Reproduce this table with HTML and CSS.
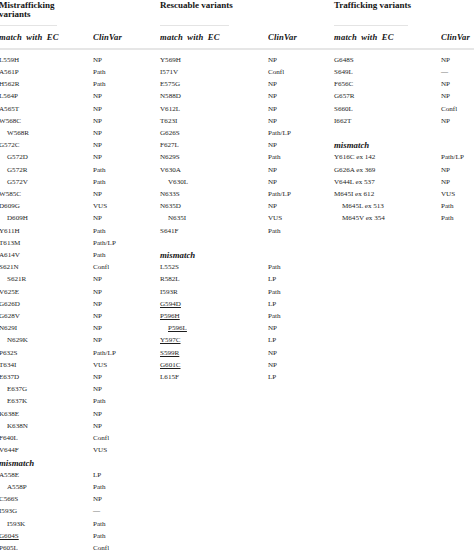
FILE: index.html
```html
<!DOCTYPE html>
<html lang="en">
<head>
<meta charset="utf-8">
<title>Variants</title>
<link rel="stylesheet" href="styles.css">
</head>
<body>
<table class="variants">
  <colgroup>
    <col class="w-var1"><col class="w-cv1"><col class="w-var2"><col class="w-cv2"><col class="w-var3"><col class="w-cv3">
  </colgroup>
  <thead>
    <tr class="title-row">
      <th colspan="2"><div class="title t1">Mistrafficking variants</div></th>
      <th colspan="2"><div class="title t2">Rescuable variants</div></th>
      <th colspan="2"><div class="title t3">Trafficking variants</div></th>
    </tr>
    <tr class="head-row">
      <th>match with EC</th><th>ClinVar</th>
      <th>match with EC</th><th>ClinVar</th>
      <th>match with EC</th><th class="cut">ClinVar</th>
    </tr>
  </thead>
  <tbody>
    <tr><td>L559H</td><td>NP</td><td>Y569H</td><td>NP</td><td>G648S</td><td>NP</td></tr>
    <tr><td>A561P</td><td>Path</td><td>I571V</td><td>Confl</td><td>S649L</td><td>—</td></tr>
    <tr><td>H562R</td><td>Path</td><td>E575G</td><td>NP</td><td>F656C</td><td>NP</td></tr>
    <tr><td>L564P</td><td>NP</td><td>N588D</td><td>NP</td><td>G657R</td><td>NP</td></tr>
    <tr><td>A565T</td><td>NP</td><td>V612L</td><td>NP</td><td>S660L</td><td>Confl</td></tr>
    <tr><td>W568C</td><td>NP</td><td>T623I</td><td>NP</td><td>I662T</td><td>NP</td></tr>
    <tr><td class="ind">W568R</td><td>NP</td><td>G626S</td><td>Path/LP</td><td></td><td></td></tr>
    <tr><td>G572C</td><td>NP</td><td>F627L</td><td>NP</td><td class="sub">mismatch</td><td></td></tr>
    <tr><td class="ind">G572D</td><td>NP</td><td>N629S</td><td>Path</td><td>Y616C ex 142</td><td>Path/LP</td></tr>
    <tr><td class="ind">G572R</td><td>Path</td><td>V630A</td><td>NP</td><td>G626A ex 369</td><td>NP</td></tr>
    <tr><td class="ind">G572V</td><td>Path</td><td class="ind">V630L</td><td>NP</td><td>V644L ex 537</td><td>NP</td></tr>
    <tr><td>W585C</td><td>NP</td><td>N633S</td><td>Path/LP</td><td>M645I ex 612</td><td>VUS</td></tr>
    <tr><td>D609G</td><td>VUS</td><td>N635D</td><td>NP</td><td class="ind">M645L ex 513</td><td>Path</td></tr>
    <tr><td class="ind">D609H</td><td>NP</td><td class="ind">N635I</td><td>VUS</td><td class="ind">M645V ex 354</td><td>Path</td></tr>
    <tr><td>Y611H</td><td>Path</td><td>S641F</td><td>Path</td><td></td><td></td></tr>
    <tr><td>T613M</td><td>Path/LP</td><td></td><td></td><td></td><td></td></tr>
    <tr><td>A614V</td><td>Path</td><td class="sub">mismatch</td><td></td><td></td><td></td></tr>
    <tr><td>S621N</td><td>Confl</td><td>L552S</td><td>Path</td><td></td><td></td></tr>
    <tr><td class="ind">S621R</td><td>NP</td><td>R582L</td><td>LP</td><td></td><td></td></tr>
    <tr><td>V625E</td><td>NP</td><td>I593R</td><td>Path</td><td></td><td></td></tr>
    <tr><td>G626D</td><td>NP</td><td><span class="ul">G594D</span></td><td>LP</td><td></td><td></td></tr>
    <tr><td>G628V</td><td>NP</td><td><span class="ul">P596H</span></td><td>Path</td><td></td><td></td></tr>
    <tr><td>N629I</td><td>NP</td><td class="ind"><span class="ul">P596L</span></td><td>NP</td><td></td><td></td></tr>
    <tr><td class="ind">N629K</td><td>NP</td><td><span class="ul">Y597C</span></td><td>LP</td><td></td><td></td></tr>
    <tr><td>P632S</td><td>Path/LP</td><td><span class="ul">S599R</span></td><td>NP</td><td></td><td></td></tr>
    <tr><td>T634I</td><td>VUS</td><td><span class="ul">G601C</span></td><td>NP</td><td></td><td></td></tr>
    <tr><td>E637D</td><td>NP</td><td>L615F</td><td>LP</td><td></td><td></td></tr>
    <tr><td class="ind">E637G</td><td>NP</td><td></td><td></td><td></td><td></td></tr>
    <tr><td class="ind">E637K</td><td>Path</td><td></td><td></td><td></td><td></td></tr>
    <tr><td>K638E</td><td>NP</td><td></td><td></td><td></td><td></td></tr>
    <tr><td class="ind">K638N</td><td>NP</td><td></td><td></td><td></td><td></td></tr>
    <tr><td>F640L</td><td>Confl</td><td></td><td></td><td></td><td></td></tr>
    <tr><td>V644F</td><td>VUS</td><td></td><td></td><td></td><td></td></tr>
    <tr><td class="sub">mismatch</td><td></td><td></td><td></td><td></td><td></td></tr>
    <tr><td>A558E</td><td>LP</td><td></td><td></td><td></td><td></td></tr>
    <tr><td class="ind">A558P</td><td>Path</td><td></td><td></td><td></td><td></td></tr>
    <tr><td>C566S</td><td>NP</td><td></td><td></td><td></td><td></td></tr>
    <tr><td>I593G</td><td>—</td><td></td><td></td><td></td><td></td></tr>
    <tr><td class="ind">I593K</td><td>Path</td><td></td><td></td><td></td><td></td></tr>
    <tr><td><span class="ul">G604S</span></td><td>Path</td><td></td><td></td><td></td><td></td></tr>
    <tr><td>P605L</td><td>Confl</td><td></td><td></td><td></td><td></td></tr>
  </tbody>
</table>
</body>
</html>
```

FILE: styles.css
```css
html, body {
  margin: 0;
  padding: 0;
  background: #ffffff;
  overflow: hidden;
}

body {
  font-family: "Liberation Serif", "Times New Roman", serif;
  color: #1a1a1a;
}

.variants {
  table-layout: fixed;
  border-collapse: collapse;
  width: 476px;
  margin-left: -1px;
}

.w-var1 { width: 94px; }
.w-cv1 { width: 67px; }
.w-var2 { width: 108px; }
.w-cv2 { width: 66px; }
.w-var3 { width: 107px; }
.w-cv3 { width: 34px; }

.variants th,
.variants td {
  padding: 0;
  text-align: left;
  vertical-align: middle;
  white-space: nowrap;
}

.title-row th {
  vertical-align: top;
  height: 26px;
}

.title {
  box-sizing: border-box;
  height: 26px;
  padding-top: 0.5px;
  font-size: 9px;
  line-height: 9.6px;
  font-weight: bold;
  color: #141414;
  border-bottom: 1px solid #e4e4e4;
  white-space: normal;
}

.t1 { width: 58px; }
.t2 { width: 69px; white-space: nowrap; }
.t3 { width: 74px; white-space: nowrap; }

.head-row th {
  height: 22px;
  font-size: 8.6px;
  font-weight: bold;
  font-style: italic;
  word-spacing: 2px;
  letter-spacing: 0.2px;
  color: #141414;
  border-bottom: 2px solid #e6e6e6;
  overflow: hidden;
}

.variants td {
  height: 12.2px;
  line-height: 12.2px;
  font-size: 7.1px;
  color: #1e1e1e;
}

.variants tbody tr:first-child td {
  padding-top: 3.8px;
}

.variants td.ind {
  padding-left: 8px;
}

.variants td.sub {
  font-size: 8.8px;
  font-weight: bold;
  font-style: italic;
  color: #141414;
}

.ul {
  text-decoration: underline;
  text-underline-offset: 1px;
}
```
